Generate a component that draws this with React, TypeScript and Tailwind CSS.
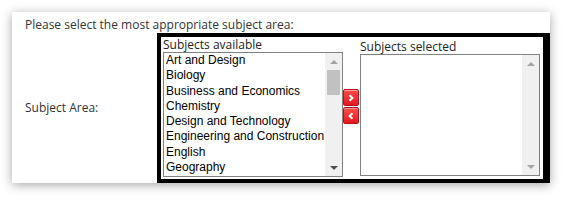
import React from "react";

const subjects = [
  "Art and Design",
  "Biology",
  "Business and Economics",
  "Chemistry",
  "Design and Technology",
  "Engineering and Construction",
  "English",
  "Geography",
];

function Arrow({ dir, dark }: { dir: "up" | "down"; dark?: boolean }) {
  const up = dir === "up";
  return (
    <div
      className={`h-0 w-0 border-x-[4px] border-x-transparent ${
        up
          ? dark
            ? "border-b-[4px] border-b-[#505050]"
            : "border-b-[4px] border-b-[#a3a3a3]"
          : dark
            ? "border-t-[4px] border-t-[#505050]"
            : "border-t-[4px] border-t-[#a3a3a3]"
      }`}
    />
  );
}

function Scrollbar({ active }: { active?: boolean }) {
  return (
    <div className="flex w-[17px] shrink-0 flex-col bg-[#f0f0f0]">
      <div className="flex h-[17px] items-center justify-center">
        <Arrow dir="up" />
      </div>
      <div className="flex-1 px-[2px]">
        {active && <div className="h-[25px] w-full bg-[#c1c1c1]" />}
      </div>
      <div className="flex h-[17px] items-center justify-center">
        <Arrow dir="down" dark={active} />
      </div>
    </div>
  );
}

function MoveButton({ dir }: { dir: "right" | "left" }) {
  return (
    <button className="flex h-[17px] w-[16px] items-center justify-center rounded-[2px] border border-[#b5121a] bg-linear-to-b from-[#ff4a4a] to-[#e3141d] shadow-[inset_0_1px_0_rgba(255,180,180,0.8)]">
      <svg viewBox="0 0 8 8" className="h-[8px] w-[8px]">
        <path
          d={dir === "right" ? "M2.6 1.2 L5.4 4 L2.6 6.8" : "M5.4 1.2 L2.6 4 L5.4 6.8"}
          fill="none"
          stroke="white"
          strokeWidth="2"
        />
      </svg>
    </button>
  );
}

export default function App() {
  return (
    <div className="min-h-[202px] bg-white pl-3 pt-3 font-['Open_Sans',sans-serif] text-[12px] text-[#333]">
      <div className="h-[171px] w-[538px] bg-white pl-[13px] pt-[5px] shadow-[0_2px_10px_rgba(0,0,0,0.35)]">
        <p className="leading-[16px]">Please select the most appropriate subject area:</p>
        <div className="flex items-center">
          <div className="w-[132px] leading-[16px]">Subject Area:</div>
          <div className="flex items-start border-y-4 border-l-4 border-r-[7px] border-black pb-[2px] pl-[2px] pr-[3px]">
            {/* available */}
            <div className="flex flex-col">
              <div className="leading-[15px] text-[#222]">Subjects available</div>
              <div className="flex h-[125px] w-[180px] overflow-hidden border border-[#828282] bg-white">
                <ul className="flex-1 overflow-hidden pl-[2px] font-['Liberation_Sans',Arial,sans-serif] text-[12px] leading-[15.25px] text-black">
                  {subjects.map((s) => (
                    <li key={s} className="whitespace-nowrap">
                      {s}
                    </li>
                  ))}
                </ul>
                <Scrollbar active />
              </div>
            </div>
            {/* buttons */}
            <div className="mt-[52px] flex w-[17px] flex-col gap-[1px]">
              <MoveButton dir="right" />
              <MoveButton dir="left" />
            </div>
            {/* selected */}
            <div className="flex flex-col pt-[2px]">
              <div className="leading-[15px] text-[#222]">Subjects selected</div>
              <div className="flex h-[122px] w-[180px] overflow-hidden border border-[#828282] bg-white">
                <div className="flex-1" />
                <Scrollbar />
              </div>
            </div>
          </div>
        </div>
      </div>
    </div>
  );
}
